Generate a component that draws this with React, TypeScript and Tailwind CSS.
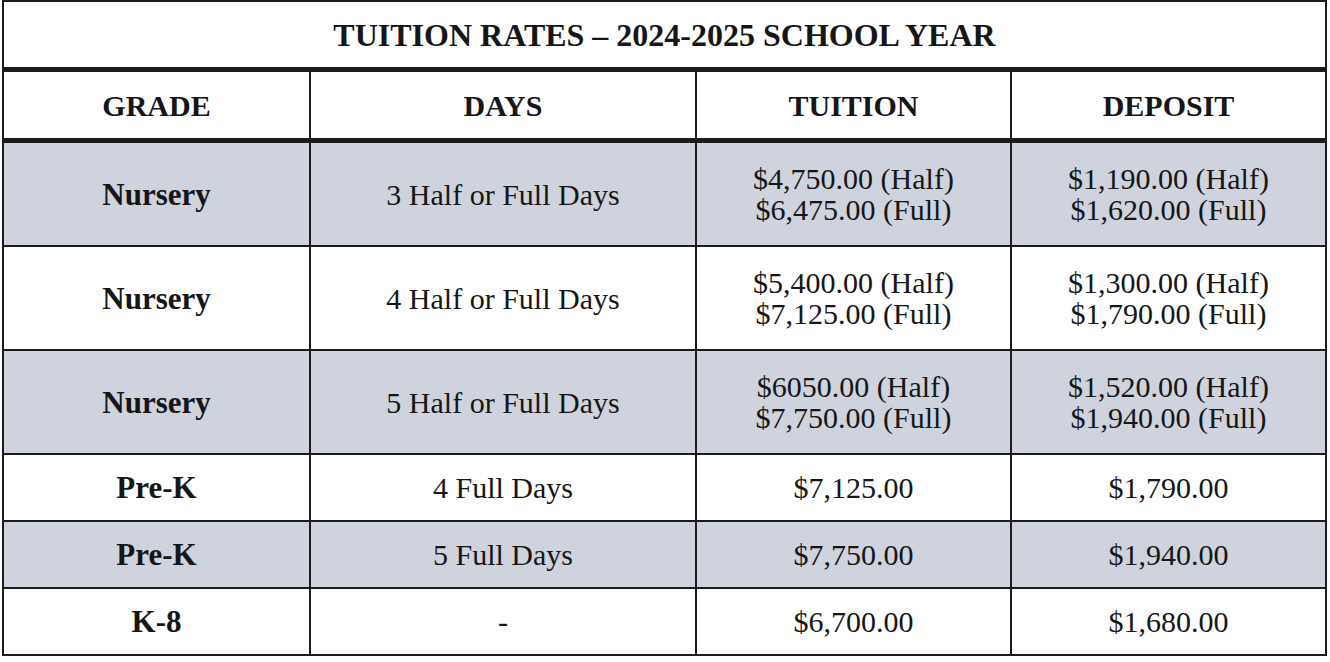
const rows = [
  { grade: 'Nursery', days: '3 Half or Full Days', tuition: ['$4,750.00 (Half)', '$6,475.00 (Full)'], deposit: ['$1,190.00 (Half)', '$1,620.00 (Full)'], shaded: true },
  { grade: 'Nursery', days: '4 Half or Full Days', tuition: ['$5,400.00 (Half)', '$7,125.00 (Full)'], deposit: ['$1,300.00 (Half)', '$1,790.00 (Full)'], shaded: false },
  { grade: 'Nursery', days: '5 Half or Full Days', tuition: ['$6050.00 (Half)', '$7,750.00 (Full)'], deposit: ['$1,520.00 (Half)', '$1,940.00 (Full)'], shaded: true },
  { grade: 'Pre-K', days: '4 Full Days', tuition: ['$7,125.00'], deposit: ['$1,790.00'], shaded: false },
  { grade: 'Pre-K', days: '5 Full Days', tuition: ['$7,750.00'], deposit: ['$1,940.00'], shaded: true },
  { grade: 'K-8', days: '-', tuition: ['$6,700.00'], deposit: ['$1,680.00'], shaded: false },
];

const cols = 'grid grid-cols-[305px_386px_315px_315px]';

export default function App() {
  return (
    <div className="min-h-screen bg-white font-['Liberation_Serif',serif] text-[#161616]">
      <div className="ml-[2px] w-[1325px] border-2 border-[#1c1c1c]">
        <div className="flex h-[70px] items-center justify-center border-b-[5px] border-[#1c1c1c] text-[32px] font-bold">
          TUITION RATES – 2024-2025 SCHOOL YEAR
        </div>
        <div className={`${cols} h-[71px] border-b-[5px] border-[#1c1c1c] text-[30px] font-bold`}>
          <div className="flex items-center justify-center">GRADE</div>
          <div className="flex items-center justify-center border-l-2 border-[#1c1c1c]">DAYS</div>
          <div className="flex items-center justify-center border-l-2 border-[#1c1c1c]">TUITION</div>
          <div className="flex items-center justify-center border-l-2 border-[#1c1c1c]">DEPOSIT</div>
        </div>
        {rows.map((r, i) => {
          const tall = r.tuition.length > 1;
          const last = i === rows.length - 1;
          return (
            <div
              key={i}
              className={`${cols} ${tall ? 'h-[104px]' : last ? 'h-[65px]' : 'h-[67px]'} ${last ? '' : 'border-b-2'} border-[#1c1c1c] ${r.shaded ? 'bg-[#cfd3dd]' : 'bg-white'} text-[30px] leading-[31px]`}
            >
              <div className="flex items-center justify-center text-[31px] font-bold">{r.grade}</div>
              <div className="flex items-center justify-center border-l-2 border-[#1c1c1c]">{r.days}</div>
              <div className="flex flex-col items-center justify-center border-l-2 border-[#1c1c1c]">
                {r.tuition.map((t) => (
                  <span key={t}>{t}</span>
                ))}
              </div>
              <div className="flex flex-col items-center justify-center border-l-2 border-[#1c1c1c]">
                {r.deposit.map((t) => (
                  <span key={t}>{t}</span>
                ))}
              </div>
            </div>
          );
        })}
      </div>
    </div>
  );
}
